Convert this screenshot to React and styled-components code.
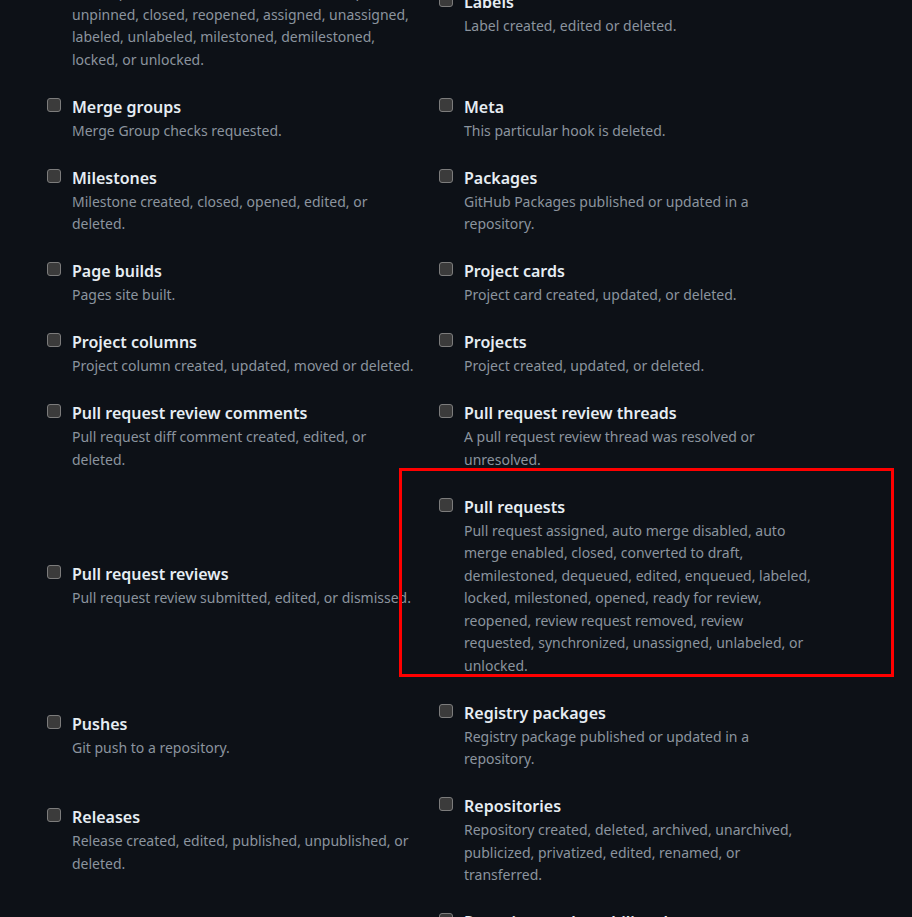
import React from 'react';
import styled, { createGlobalStyle } from 'styled-components';

//------------------------------------------------------->> Data

const events = [
  { title: 'Issues', lines: ['Issue opened, edited, deleted, transferred, pinned,', 'unpinned, closed, reopened, assigned, unassigned,', 'labeled, unlabeled, milestoned, demilestoned,', 'locked, or unlocked.'] },
  { title: 'Labels', lines: ['Label created, edited or deleted.'] },
  { title: 'Merge groups', lines: ['Merge Group checks requested.'] },
  { title: 'Meta', lines: ['This particular hook is deleted.'] },
  { title: 'Milestones', lines: ['Milestone created, closed, opened, edited, or', 'deleted.'] },
  { title: 'Packages', lines: ['GitHub Packages published or updated in a', 'repository.'] },
  { title: 'Page builds', lines: ['Pages site built.'] },
  { title: 'Project cards', lines: ['Project card created, updated, or deleted.'] },
  { title: 'Project columns', lines: ['Project column created, updated, moved or deleted.'] },
  { title: 'Projects', lines: ['Project created, updated, or deleted.'] },
  { title: 'Pull request review comments', lines: ['Pull request diff comment created, edited, or', 'deleted.'] },
  { title: 'Pull request review threads', lines: ['A pull request review thread was resolved or', 'unresolved.'] },
  { title: 'Pull request reviews', lines: ['Pull request review submitted, edited, or dismissed.'] },
  {
    title: 'Pull requests',
    highlight: true,
    lines: [
      'Pull request assigned, auto merge disabled, auto',
      'merge enabled, closed, converted to draft,',
      'demilestoned, dequeued, edited, enqueued, labeled,',
      'locked, milestoned, opened, ready for review,',
      'reopened, review request removed, review',
      'requested, synchronized, unassigned, unlabeled, or',
      'unlocked.',
    ],
  },
  { title: 'Pushes', lines: ['Git push to a repository.'] },
  { title: 'Registry packages', lines: ['Registry package published or updated in a', 'repository.'] },
  { title: 'Releases', lines: ['Release created, edited, published, unpublished, or', 'deleted.'] },
  { title: 'Repositories', lines: ['Repository created, deleted, archived, unarchived,', 'publicized, privatized, edited, renamed, or', 'transferred.'] },
  { title: 'Repository imports', lines: ['Repository import succeeded, failed, or cancelled.'] },
  { title: 'Repository vulnerability alerts', lines: ['Dependabot alert (aka dependency vulnerability', 'alert) created, resolved, or dismissed on a', 'repository.'] },
];

//------------------------------------------------------->> Components

const EventItem = ({ title, lines, highlight }) => (
  <Item>
    {highlight && <Highlight />}
    <Check role="checkbox" aria-checked="false" />
    <Body>
      <Title>{title}</Title>
      <Note>
        {lines.map((line) => (
          <span key={line}>{line}</span>
        ))}
      </Note>
    </Body>
  </Item>
);

export default function App() {
  return (
    <>
      <GlobalStyle />
      <Page>
        <EventGrid>
          {events.map((ev) => (
            <EventItem key={ev.title} {...ev} />
          ))}
        </EventGrid>
      </Page>
    </>
  );
}

//------------------------------------------------------->> Styling

const GlobalStyle = createGlobalStyle`
  html, body {
    margin: 0;
    padding: 0;
    background: #0d1117;
    overflow: hidden;
  }
  body {
    font-family: 'Noto Sans', 'Liberation Sans', sans-serif;
  }
`;

const Page = styled.main`
  height: 917px;
  overflow: hidden;
  background: #0d1117;
`;

// scrolled list: the first row starts above the viewport
const EventGrid = styled.div`
  display: grid;
  grid-template-columns: 392px 1fr;
  align-items: center;
  row-gap: 23.5px;
  padding-left: 47px;
  margin-top: -44px;
`;

const Item = styled.div`
  position: relative;
  display: flex;
  align-items: flex-start;
`;

const Check = styled.span`
  flex: none;
  box-sizing: border-box;
  width: 14px;
  height: 14px;
  margin: 3px 11px 0 0;
  border: 1px solid #7c7c7c;
  border-radius: 3px;
  background: #3b3b3b;
`;

const Body = styled.div`
  display: flex;
  flex-direction: column;
`;

const Title = styled.div`
  color: #e6edf3;
  font-size: 16px;
  font-weight: 600;
  line-height: 24px;
  margin-bottom: 1px;
  white-space: nowrap;
`;

const Note = styled.div`
  display: flex;
  flex-direction: column;
  color: #8b949e;
  font-size: 14px;
  line-height: 22.5px;

  span {
    white-space: nowrap;
  }
`;

const Highlight = styled.div`
  position: absolute;
  top: -27px;
  left: -40px;
  bottom: 0;
  width: 495px;
  box-sizing: border-box;
  border: 3px solid #ff0000;
  pointer-events: none;
`;
